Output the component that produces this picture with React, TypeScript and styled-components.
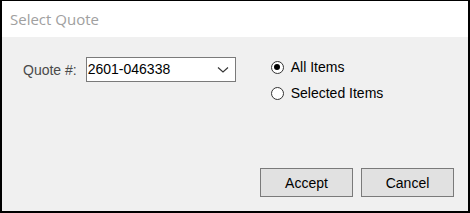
import styled, { createGlobalStyle } from 'styled-components';

const GlobalStyle = createGlobalStyle`
    html, body {
        margin: 0;
        padding: 0;
        background: #000000;
    }
    * {
        box-sizing: border-box;
    }
`;

const App = () => {
    return (
        <>
            <GlobalStyle />
            <StyledFrame>
                <StyledTitleBar>Select Quote</StyledTitleBar>
                <StyledBody>
                    <StyledTopRow>
                        <StyledQuoteField>
                            <StyledLabel>Quote #:</StyledLabel>
                            <StyledCombo>
                                <StyledComboText>2601-046338</StyledComboText>
                                <StyledChevron viewBox="0 0 12 8" width="12" height="8">
                                    <path d="M1 1.5 L6 6 L11 1.5" fill="none" stroke="#333" strokeWidth="1.1" />
                                </StyledChevron>
                            </StyledCombo>
                        </StyledQuoteField>
                        <StyledRadioGroup>
                            <StyledRadioRow>
                                <StyledRadio checked />
                                <StyledRadioLabel>All Items</StyledRadioLabel>
                            </StyledRadioRow>
                            <StyledRadioRow>
                                <StyledRadio checked={false} />
                                <StyledRadioLabel>Selected Items</StyledRadioLabel>
                            </StyledRadioRow>
                        </StyledRadioGroup>
                    </StyledTopRow>
                    <StyledFooter>
                        <StyledButton>Accept</StyledButton>
                        <StyledButton>Cancel</StyledButton>
                    </StyledFooter>
                </StyledBody>
            </StyledFrame>
        </>
    );
};

const StyledFrame = styled.div`
    display: flex;
    flex-direction: column;
    width: 470px;
    height: 213px;
    border-style: solid;
    border-color: #000000;
    border-width: 1px 2px 2px 2px;
`;

const StyledTitleBar = styled.div`
    display: flex;
    align-items: center;
    height: 36px;
    padding-left: 8px;
    padding-bottom: 1px;
    background-color: #ffffff;
    color: #a0a0a0;
    font-family: 'Open Sans', 'Noto Sans', sans-serif;
    font-size: 15px;
`;

const StyledBody = styled.div`
    display: flex;
    flex-direction: column;
    flex: 1;
    background-color: #f0f0f0;
    padding: 20px 14px 14px 21px;
    font-family: 'Liberation Sans', Arial, sans-serif;
    font-size: 14px;
`;

const StyledTopRow = styled.div`
    display: flex;
    align-items: flex-start;
`;

const StyledQuoteField = styled.div`
    display: flex;
    align-items: center;
    gap: 9px;
`;

const StyledLabel = styled.span`
    color: #4a4a4a;
`;

const StyledCombo = styled.div`
    display: flex;
    align-items: center;
    justify-content: space-between;
    width: 150px;
    height: 25px;
    padding: 0 6px 0 1px;
    background-color: #ffffff;
    border: 1px solid #7a7a7a;
    color: #000000;
`;

const StyledComboText = styled.span`
    padding-bottom: 1px;
`;

const StyledChevron = styled.svg`
    display: block;
`;

const StyledRadioGroup = styled.div`
    display: flex;
    flex-direction: column;
    gap: 10px;
    margin-left: 35px;
    margin-top: 2px;
`;

const StyledRadioRow = styled.div`
    display: flex;
    align-items: center;
    gap: 7px;
    height: 16px;
`;

const StyledRadio = styled.span<{ checked: boolean }>`
    position: relative;
    width: 13px;
    height: 13px;
    border-radius: 50%;
    border: 1px solid #333333;
    background-color: #ffffff;
    &::after {
        content: '';
        display: ${({ checked }) => (checked ? 'block' : 'none')};
        position: absolute;
        left: 2.5px;
        top: 2.5px;
        width: 6px;
        height: 6px;
        border-radius: 50%;
        background-color: #000000;
    }
`;

const StyledRadioLabel = styled.span`
    color: #000000;
`;

const StyledFooter = styled.div`
    display: flex;
    justify-content: flex-end;
    gap: 8px;
    margin-top: auto;
`;

const StyledButton = styled.button`
    width: 93px;
    height: 29px;
    background-color: #e1e1e1;
    border: 1px solid #7a7a7a;
    color: #000000;
    font-family: 'Liberation Sans', Arial, sans-serif;
    font-size: 14px;
    padding: 0;
`;

export default App;
